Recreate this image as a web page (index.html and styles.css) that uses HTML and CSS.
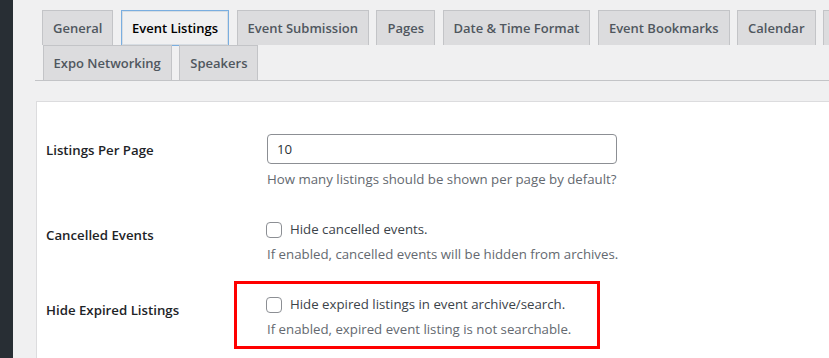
FILE: index.html
```html
<!DOCTYPE html>
<html lang="en">
<head>
<meta charset="utf-8">
<title>Event Listings Settings</title>
<link rel="stylesheet" href="styles.css">
</head>
<body>
<div class="layout">
  <aside class="sidebar"></aside>
  <main class="main">
    <nav class="tabs">
      <a class="tab">General</a>
      <a class="tab active">Event Listings</a>
      <a class="tab">Event Submission</a>
      <a class="tab">Pages</a>
      <a class="tab">Date &amp; Time Format</a>
      <a class="tab">Event Bookmarks</a>
      <a class="tab">Calendar</a>
      <a class="tab tab-more" aria-label="More settings"></a>
      <a class="tab">Expo Networking</a>
      <a class="tab">Speakers</a>
    </nav>
    <section class="panel">
      <div class="form-row">
        <div class="th">Listings Per Page</div>
        <div class="td">
          <input class="text-input" type="text" value="10">
          <p class="desc">How many listings should be shown per page by default?</p>
        </div>
      </div>
      <div class="form-row">
        <div class="th">Cancelled Events</div>
        <div class="td">
          <label class="check"><input type="checkbox" class="box"><span>Hide cancelled events.</span></label>
          <p class="desc">If enabled, cancelled events will be hidden from archives.</p>
        </div>
      </div>
      <div class="form-row">
        <div class="th">Hide Expired Listings</div>
        <div class="td td-highlight">
          <div class="highlight">
            <label class="check"><input type="checkbox" class="box"><span>Hide expired listings in event archive/search.</span></label>
            <p class="desc">If enabled, expired event listing is not searchable.</p>
          </div>
        </div>
      </div>
    </section>
  </main>
</div>
</body>
</html>
```
FILE: styles.css
```css
html, body {
  margin: 0;
  height: 100%;
  overflow: hidden;
  background: #f0f0f1;
  font-family: "Open Sans", "Noto Sans", sans-serif;
  font-size: 13.25px;
}

.layout {
  display: flex;
  width: 1000px;
  min-height: 358px;
}

.sidebar {
  flex: none;
  width: 13px;
  background: #282e34;
}

.main {
  flex: none;
  width: 965px;
  padding-left: 22px;
  display: flex;
  flex-direction: column;
}

.tabs {
  display: flex;
  flex-wrap: wrap;
  width: 920px;
  padding-top: 10px;
  border-bottom: 1px solid #c3c4c7;
}

.tab {
  margin-left: 7.5px;
  padding: 5px 10px;
  line-height: 24px;
  min-height: 24px;
  border: 1px solid #c3c4c7;
  border-bottom: none;
  background: #dcdcde;
  color: #50575e;
  font-size: 13px;
  font-weight: 600;
  white-space: nowrap;
  text-decoration: none;
}

.tab:first-child {
  margin-left: 7px;
}

.tab-more {
  width: 80px;
}

.tab.active {
  background: #f0f0f1;
  color: #000;
  border-color: #7aaee0;
  box-shadow: inset 0 0 0 1px #d7dde3, 0 1px 0 #7aaee0;
}

.panel {
  flex: 1;
  margin-top: 20px;
  margin-left: 1px;
  padding-top: 17px;
  background: #fff;
  border-top: 1px solid #dcdcde;
  border-left: 1px solid #dcdcde;
}

.form-row {
  display: flex;
}

.th {
  flex: none;
  box-sizing: border-box;
  width: 230px;
  padding: 21px 0 0 9px;
  line-height: 20px;
  font-weight: 600;
  color: #1d2327;
}

.td {
  padding: 15px 0;
  line-height: 20px;
  color: #3c434a;
}

.text-input {
  display: block;
  box-sizing: border-box;
  width: 350px;
  height: 30px;
  margin: 0;
  padding: 0 9px;
  border: 1px solid #8c8f94;
  border-radius: 4px;
  background: #fff;
  font-family: "Open Sans", "Noto Sans", sans-serif;
  font-size: 13.25px;
  color: #2c3338;
}

.desc {
  margin: 5px 0 0;
  color: #646970;
}

.check {
  display: flex;
  align-items: center;
  height: 20px;
}

.box {
  appearance: none;
  -webkit-appearance: none;
  box-sizing: border-box;
  width: 16px;
  height: 16px;
  margin: 2px 8px 0 -1px;
  border: 1px solid #8c8f94;
  border-radius: 4px;
  background: #fff;
}

.td-highlight {
  padding-top: 2px;
}

.highlight {
  box-sizing: border-box;
  width: 366px;
  margin-left: -33px;
  padding: 10px 0 7px 30px;
  border: 3px solid #f00;
}
```
